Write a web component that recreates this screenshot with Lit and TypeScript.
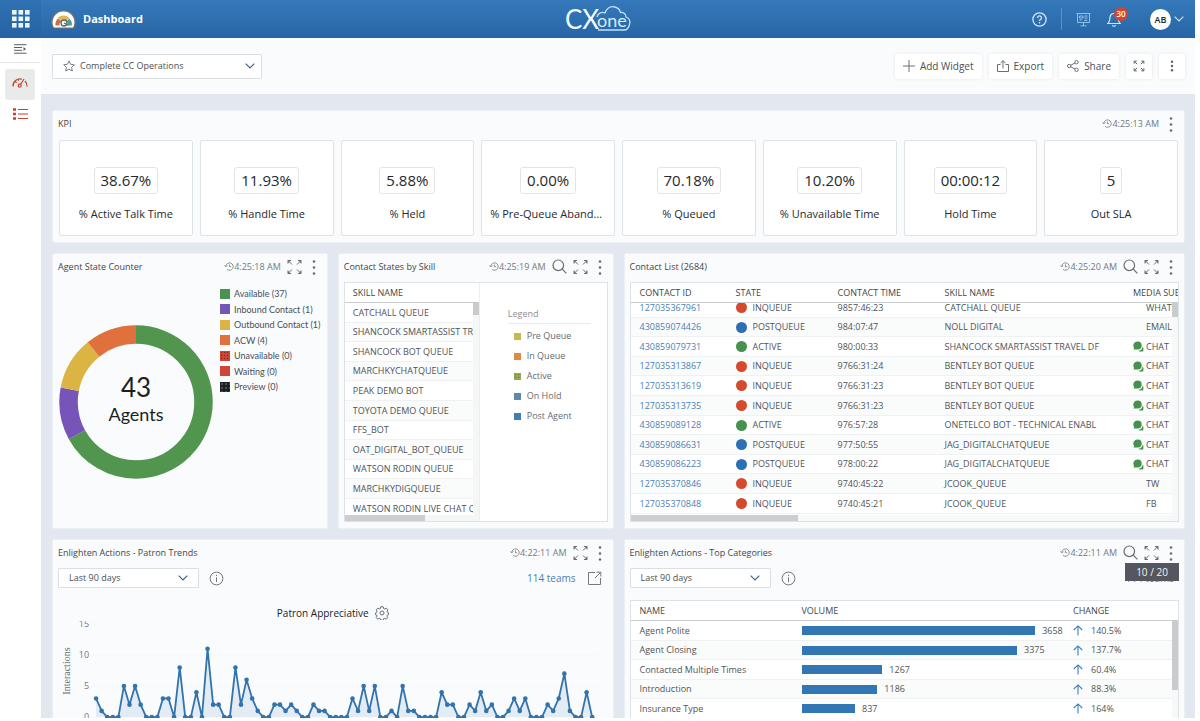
import { LitElement, html, svg, css, nothing } from "lit";
import { customElement, property } from "lit/decorators.js";
import { classMap } from "lit/directives/class-map.js";

/* ---------- icons ---------- */

const expandIcon = html`<svg class="ico" width="15" height="16" viewBox="0 0 15 16" fill="none" stroke="currentColor" aria-hidden="true">
  <path d="M1 4.500V1.500H4M1 1.500l4 4M11 1.500h3V4.500M14 1.500l-4 4M1 11.500v3H4M1 14.500l4-4M14 11.500v3H11M14 14.500l-4-4" />
  <path d="M1 1.500h2.500L1 4zM14 1.500v2.500L11.500 1.500zM1 14.500V12l2.500 2.500zM14 14.500h-2.500L14 12z" fill="currentColor" stroke="none" />
</svg>`;

const kebabIcon = html`<svg class="ico" width="4" height="16" viewBox="0 0 4 16" fill="currentColor" aria-hidden="true">
  <circle cx="2" cy="2.500" r="1.300" /><circle cx="2" cy="8.500" r="1.300" /><circle cx="2" cy="14.500" r="1.300" />
</svg>`;

const searchIcon = html`<svg class="ico" width="15" height="15" viewBox="0 0 15 15" fill="none" stroke="currentColor" stroke-width="1.200" aria-hidden="true">
  <circle cx="6.300" cy="6.300" r="5.300" /><path d="M10.200 10.200l4.200 4.200" />
</svg>`;

const historyIcon = html`<svg class="ico" width="10" height="9" viewBox="0 0 10 9" fill="none" stroke="currentColor" stroke-width=".8" aria-hidden="true">
  <path d="M1.800 4.500a3.700 3.700 0 1 1 1.200 2.800M.3 3.400l1.500 1.500 1.400-1.500M5.400 2.400v2.300h1.800" />
</svg>`;

const chevronIcon = html`<svg class="chev" width="10" height="6" viewBox="0 0 10 6" fill="none" stroke="currentColor" stroke-width="1.100" aria-hidden="true">
  <path d="M.7.7L5 5 9.300.7" />
</svg>`;

const infoIcon = html`<svg width="15" height="15" viewBox="0 0 15 15" fill="none" stroke="#75797d" aria-hidden="true">
  <circle cx="7.500" cy="7.500" r="6.400" /><path d="M7.500 6.300v4.800M7.500 3.800v1.300" />
</svg>`;

const chatIcon = html`<svg width="11" height="11" viewBox="0 0 11 11" aria-hidden="true">
  <path d="M4.700.6a4 4 0 0 1 0 8H.5l.6-1.700A4 4 0 0 1 4.700.6z" fill="#45914d" />
  <path d="M9.700 5.200l.8 2-.3 3.200H6.300l-.9-.7c2.400 0 4.200-1.800 4.300-4.500z" fill="#45914d" />
</svg>`;

const arrowUpIcon = html`<svg width="10" height="11" viewBox="0 0 10 11" fill="none" stroke="#3d7fbb" stroke-width="1.100" aria-hidden="true">
  <path d="M5 10.500V1M.8 5L5 .9 9.200 5" />
</svg>`;

/* ---------- shared styles ---------- */

const base = css`
  :host { display: block; min-width: 0; }
  * { box-sizing: border-box; }
  svg { display: block; flex: none; }
  button {
    font: inherit; color: inherit; background: none; border: 0; padding: 0;
    display: flex; align-items: center; cursor: pointer;
  }
  a { text-decoration: none; color: #4a7fb5; }
  .select { display: inline-grid; grid-template-columns: 1fr auto; align-items: center; color: #4b4f54; }
  .select select {
    grid-area: 1 / 1 / 2 / 3; appearance: none; width: 100%; font: inherit; color: inherit;
    background: #fff; border: 1px solid #dcdfe2; border-radius: 1px; margin: 0;
  }
  .select .chev { grid-area: 1 / 2; margin-right: 11px; pointer-events: none; color: #3c5f86; }
  table { border-collapse: separate; border-spacing: 0; table-layout: fixed; width: 100%; }
  th, td { padding: 0 0 0 9px; text-align: left; white-space: nowrap; overflow: hidden; line-height: 18px; }
  th {
    position: sticky; top: 0; z-index: 1; height: 20px; background: #fff;
    border-bottom: 1px solid #c9ccce; font-weight: 400; color: #43474b;
  }
  td { height: 20px; border-bottom: 1px solid #f0f1f2; color: #505459; }
  tbody tr:nth-child(5n + 2) td, tbody tr:nth-child(5n + 4) td { height: 19px; }
  tbody tr:nth-child(even) { background: #fafbfb; }
  .box { background: #fff; border: 1px solid #dfe2e4; }
  .toolline { display: flex; align-items: center; }
  .toolline .select { width: 141px; }
  .toolline select { height: 20px; padding-left: 10px; }
  .info { margin-left: 10px; }
`;

/* ---------- widget frame ---------- */

@customElement("dash-widget")
class DashWidget extends LitElement {
  @property() heading = "";
  @property() time = "";
  @property({ type: Boolean }) searchable = false;
  @property({ type: Boolean }) expandable = false;

  static styles = [base, css`
    :host { display: flex; flex-direction: column; background: #f9fbfd; padding: 0 5px 6px; box-shadow: 0 0 2px #fff; }
    header { display: flex; align-items: center; height: 25px; margin-bottom: 3px; gap: 6px; padding-right: 6px; color: #6a6f73; }
    h2 { flex: 1; margin: 0; font-size: 9px; line-height: 14px; font-weight: 500; color: #43474b; white-space: nowrap; }
    .time { display: flex; align-items: center; font-size: 9px; line-height: 14px; color: #74797e; white-space: nowrap; }
    .more { margin-left: 4px; }
    .body { flex: 1; min-height: 0; display: flex; flex-direction: column; }
  `];

  render() {
    return html`
      <header>
        <h2>${this.heading}</h2>
        <span class="time">${historyIcon}${this.time}</span>
        ${this.searchable ? html`<button aria-label="Search">${searchIcon}</button>` : nothing}
        ${this.expandable ? html`<button aria-label="Expand">${expandIcon}</button>` : nothing}
        <button class="more" aria-label="More options">${kebabIcon}</button>
      </header>
      <div class="body"><slot></slot></div>
    `;
  }
}

/* ---------- KPI row ---------- */

const kpis: [string, string][] = [
  ["38.67%", "% Active Talk Time"],
  ["11.93%", "% Handle Time"],
  ["5.88%", "% Held"],
  ["0.00%", "% Pre-Queue Abandoned"],
  ["70.18%", "% Queued"],
  ["10.20%", "% Unavailable Time"],
  ["00:00:12", "Hold Time"],
  ["5", "Out SLA"],
];

@customElement("kpi-cards")
class KpiCards extends LitElement {
  static styles = [base, css`
    .cards { display: grid; grid-template-columns: repeat(8, minmax(0, 1fr)); gap: 7px; padding: 1px 1px 0; }
    .card {
      display: flex; flex-direction: column; align-items: center; gap: 12px; height: 96px;
      padding: 26px 8px 0; background: #fff; border: 1px solid #dfe3e5; border-radius: 2px; color: #26292c;
    }
    .value { font-size: 15px; line-height: 25px; padding: 0 6px; border: 1px solid #e2e4e6; border-radius: 3px; }
    .label { font-size: 11px; line-height: 16px; max-width: 100%; overflow: hidden; text-overflow: ellipsis; white-space: nowrap; }
  `];

  render() {
    return html`<div class="cards">
      ${kpis.map(([value, label]) => html`<div class="card"><div class="value">${value}</div><div class="label">${label}</div></div>`)}
    </div>`;
  }
}

/* ---------- agent state donut ---------- */

const slices = [
  { color: "#52954f", from: 0, to: 241 },
  { color: "#7654b8", from: 241, to: 281 },
  { color: "#dcb443", from: 281, to: 321 },
  { color: "#e0703c", from: 321, to: 360 },
];

const agentLegend: [string, string][] = [
  ["Available (37)", "green"],
  ["Inbound Contact (1)", "purple"],
  ["Outbound Contact (1)", "yellow"],
  ["ACW (4)", "orange"],
  ["Unavailable (0)", "red dotted"],
  ["Waiting (0)", "red"],
  ["Preview (0)", "black dotted"],
];

@customElement("agent-states")
class AgentStates extends LitElement {
  static styles = [base, css`
    :host { font-family: Lato, sans-serif; }
    .wrap { display: flex; align-items: flex-start; gap: 7px; padding: 4px 0 0 1px; }
    .donut { margin-top: 39px; flex: none; }
    .count { font-size: 26px; fill: #1c1f22; text-anchor: middle; }
    .unit { font-size: 18px; fill: #1c1f22; text-anchor: middle; }
    ul { list-style: none; margin: 0; padding: 0; display: grid; font-size: 9px; line-height: 13px; color: #4b4f54; }
    li { display: flex; align-items: center; gap: 4px; white-space: nowrap; height: 15px; }
    li:nth-child(even) { height: 16px; }
    .sw { width: 10px; height: 10px; }
    .green { background: #4b9150; }
    .purple { background: #7257b4; }
    .yellow { background: #dcb443; }
    .orange { background: #e0703c; }
    .red { background: #cf4436; }
    .black { background: #1d2023; }
    .red.dotted { background-image: radial-gradient(#6b2a20 1px, transparent 1px); background-size: 3px 3px; }
    .black.dotted { background-image: radial-gradient(#4a4f53 1px, transparent 1px); background-size: 4px 4px; }
  `];

  render() {
    return html`<div class="wrap">
      <svg class="donut" width="154" height="154" viewBox="0 0 154 154" role="img" aria-label="43 agents by state">
        ${slices.map((s) => svg`<circle cx="77" cy="77" r="67.500" fill="none" stroke=${s.color} stroke-width="18.500"
          pathLength="360" stroke-dasharray="${s.to - s.from} 360" stroke-dashoffset=${-s.from} transform="rotate(-90 77 77)" />`)}
        <text class="count" x="77" y="72">43</text>
        <text class="unit" x="77" y="96">Agents</text>
      </svg>
      <ul>${agentLegend.map(([label, cls]) => html`<li><span class="sw ${cls}"></span>${label}</li>`)}</ul>
    </div>`;
  }
}

/* ---------- contact states by skill ---------- */

const skills = [
  "CATCHALL QUEUE", "SHANCOCK SMARTASSIST TRAVEL", "SHANCOCK BOT QUEUE", "MARCHKYCHATQUEUE",
  "PEAK DEMO BOT", "TOYOTA DEMO QUEUE", "FFS_BOT", "OAT_DIGITAL_BOT_QUEUE", "WATSON RODIN QUEUE",
  "MARCHKYDIGQUEUE", "WATSON RODIN LIVE CHAT QUEUE",
];

const skillLegend: [string, string][] = [
  ["Pre Queue", "pre"], ["In Queue", "inq"], ["Active", "act"], ["On Hold", "hold"], ["Post Agent", "post"],
];

@customElement("skill-states")
class SkillStates extends LitElement {
  static styles = [base, css`
    :host { flex: 1; min-height: 0; display: grid; }
    .box { display: grid; grid-template-columns: 135px 1fr; height: 240px; overflow: hidden; }
    .list { display: grid; grid-template: minmax(0, 1fr) 6px / minmax(0, 1fr) 6px; height: 238px; border-right: 1px solid #eceeef; }
    .rows { grid-column: 1 / 3; grid-row: 1; overflow: hidden; }
    th, td { padding-left: 8px; }
    td { padding-right: 6px; }
    td div { overflow: hidden; }
    .vbar { grid-area: 1 / 2; z-index: 2; background: #f5f6f6; margin-top: 20px; }
    .vbar i { display: block; height: 12px; background: #c9cbcc; }
    .hbar { grid-area: 2 / 1 / 3 / 3; background: #f5f6f6; }
    .hbar i { display: block; width: 80px; height: 6px; background: #cccecf; }
    .legend { padding: 24px 16px 0 28px; color: #666b70; }
    h3 { margin: 0 0 5px; font-size: 9px; line-height: 14px; padding-bottom: 2px; font-weight: 400; color: #8a8f93; border-bottom: 1px solid #e8eaeb; }
    ul { list-style: none; margin: 0; padding: 0 0 0 6px; display: grid; gap: 6px; line-height: 14px; }
    li { display: flex; align-items: center; gap: 6px; white-space: nowrap; }
    .sw { width: 7px; height: 7px; }
    .pre { background: #c9b84b; }
    .inq { background: #de8a42; }
    .act { background: #93a94c; background-image: radial-gradient(#5f7d35 1px, transparent 1px); background-size: 3px 3px; }
    .hold { background: #5e88ab; }
    .post { background: #417cb5; }
  `];

  render() {
    return html`<div class="box">
      <div class="list">
        <div class="rows">
          <table>
            <thead><tr><th>SKILL NAME</th></tr></thead>
            <tbody>${skills.map((s) => html`<tr><td><div>${s}</div></td></tr>`)}</tbody>
          </table>
        </div>
        <div class="vbar"><i></i></div>
        <div class="hbar"><i></i></div>
      </div>
      <div class="legend">
        <h3>Legend</h3>
        <ul>${skillLegend.map(([label, cls]) => html`<li><span class="sw ${cls}"></span>${label}</li>`)}</ul>
      </div>
    </div>`;
  }
}

/* ---------- contact list ---------- */

const contacts: [string, string, string, string, string][] = [
  ["127035367961", "INQUEUE", "9857:46:23", "CATCHALL QUEUE", "WHATSAPP"],
  ["430859074426", "POSTQUEUE", "984:07:47", "NOLL DIGITAL", "EMAIL"],
  ["430859079731", "ACTIVE", "980:00:33", "SHANCOCK SMARTASSIST TRAVEL DF", "CHAT"],
  ["127035313867", "INQUEUE", "9766:31:24", "BENTLEY BOT QUEUE", "CHAT"],
  ["127035313619", "INQUEUE", "9766:31:23", "BENTLEY BOT QUEUE", "CHAT"],
  ["127035313735", "INQUEUE", "9766:31:23", "BENTLEY BOT QUEUE", "CHAT"],
  ["430859089128", "ACTIVE", "976:57:28", "ONETELCO BOT - TECHNICAL ENABL", "CHAT"],
  ["430859086631", "POSTQUEUE", "977:50:55", "JAG_DIGITALCHATQUEUE", "CHAT"],
  ["430859086223", "POSTQUEUE", "978:00:22", "JAG_DIGITALCHATQUEUE", "CHAT"],
  ["127035370846", "INQUEUE", "9740:45:22", "JCOOK_QUEUE", "TW"],
  ["127035370848", "INQUEUE", "9740:45:21", "JCOOK_QUEUE", "FB"],
];

@customElement("contact-list")
class ContactList extends LitElement {
  static styles = [base, css`
    .box { display: grid; grid-template: minmax(0, 1fr) 6px / minmax(0, 1fr) 6px; height: 240px; }
    .rows { grid-area: 1 / 1 / 2 / 3; overflow: hidden; }
    table { margin-bottom: 12px; }
    .id { width: 96px; }
    .state { width: 102px; }
    .time { width: 107px; }
    .media { width: 54px; }
    .flag { display: flex; align-items: center; gap: 6px; }
    .dot { width: 11px; height: 11px; border-radius: 50%; background: #2c6fb5; }
    .dot.inqueue { background: #d54a2d; }
    .dot.active { background: #45914d; }
    .channel { display: grid; grid-template-columns: 11px 1fr; gap: 2px; align-items: center; height: 18px; }
    .channel span { grid-column: 2; }
    .channel svg { grid-row: 1; }
    .vbar { grid-area: 1 / 2; z-index: 2; margin-top: 20px; background: #f7f8f8; }
    .vbar i { display: block; height: 14px; background: #c9cbcc; }
    .hbar { grid-area: 2 / 1 / 3 / 3; background: #f7f8f8; }
    .hbar i { display: block; width: 167px; height: 6px; background: #cccecf; }
  `];

  firstUpdated() {
    this.renderRoot.querySelector(".rows")!.scrollTop = 5;
  }

  render() {
    return html`<div class="box">
      <div class="rows">
        <table>
          <colgroup><col class="id" /><col class="state" /><col class="time" /><col /><col class="media" /></colgroup>
          <thead><tr><th>CONTACT ID</th><th>STATE</th><th>CONTACT TIME</th><th>SKILL NAME</th><th>MEDIA SUBTYPE</th></tr></thead>
          <tbody>
            ${contacts.map(([id, state, time, skill, media]) => html`<tr>
              <td><a href="#${id}">${id}</a></td>
              <td><div class="flag"><span class=${classMap({ dot: true, [state.toLowerCase()]: true })}></span>${state}</div></td>
              <td>${time}</td>
              <td>${skill}</td>
              <td><div class="channel">${media === "CHAT" ? chatIcon : nothing}<span>${media}</span></div></td>
            </tr>`)}
          </tbody>
        </table>
      </div>
      <div class="vbar"><i></i></div>
      <div class="hbar"><i></i></div>
    </div>`;
  }
}

/* ---------- patron trends ---------- */

const interactions = [
  3, 1, 0, 0, 0, 5, 2, 5, 2, 0, 0, 0, 3, 3, 0, 8, 0, 0, 4, 0, 11, 2, 2, 0, 0, 8, 2, 6, 3, 1, 0, 0, 2, 2, 1, 2, 1, 0, 0, 2, 1, 1, 0, 0, 0, 0,
  3, 1, 5, 1, 5, 0, 0, 1, 0, 5, 1, 1, 0, 0, 0, 0, 4, 2, 2, 0, 0, 2, 1, 4, 1, 2, 0, 0, 1, 3, 1, 3, 0, 0, 0, 2, 1, 3, 7, 1, 0, 0, 4, 0,
];

const rangeSelect = html`<label class="select">
  <select aria-label="Date range"><option>Last 90 days</option><option>Last 30 days</option></select>${chevronIcon}
</label>
<button class="info" aria-label="Information">${infoIcon}</button>`;

@customElement("patron-trends")
class PatronTrends extends LitElement {
  static styles = [base, css`
    .toolline { padding-right: 6px; }
    .teams { margin-left: auto; margin-right: 11px; font-size: 10px; line-height: 14px; }
    .title { display: flex; justify-content: center; align-items: center; gap: 6px; margin-top: 17px; font-size: 10px; line-height: 16px; color: #1e2225; }
    .plot { width: 100%; height: auto; }
    .tick { font-size: 9px; fill: #74797e; text-anchor: end; }
    .axis { font-family: "Liberation Serif", serif; font-size: 10px; fill: #6a6f74; text-anchor: middle; }
    .line { fill: none; stroke: #3273ab; stroke-width: 1.8; stroke-linejoin: round; }
    .area { fill: #e3ebf4; }
    .point { fill: #3273ab; }
    .grid { stroke: #f5f7f9; }
  `];

  render() {
    const x = (i: number) => 38 + i * 5.57;
    const y = (v: number) => 96 - v * 6.2;
    const pts = interactions.map((v, i) => `${x(i).toFixed(1)},${y(v).toFixed(1)}`).join(" ");
    return html`
      <div class="toolline">
        ${rangeSelect}
        <a class="teams" href="#teams">114 teams</a>
        <button aria-label="Open in new window">
          <svg width="15" height="15" viewBox="0 0 15 15" fill="none" stroke="#75797d">
            <path d="M8 1.500H1.500v12h12V7M9.500 1.200h4.300v4.300M13.600 1.400L8 7" />
          </svg>
        </button>
      </div>
      <div class="title">Patron Appreciative
        <svg width="14" height="14" viewBox="0 0 14 14" fill="none" stroke="#6a6f74">
          <path d="M5.800.8h2.400l.4 1.700 1.200.5 1.500-.9 1.600 1.700-.8 1.400.4 1.200 1 .3v2l-1.200.4-.4 1 .8 1.500-1.500 1.600-1.500-.9-1.100.5-.4 1.400H5.800l-.4-1.400-1.200-.5-1.500.8-1.500-1.500.8-1.500-.4-1-1-.3v-2l1-.4.4-1.200-.8-1.400 1.600-1.700 1.500.9 1.100-.5z" />
          <circle cx="7" cy="7" r="2" />
        </svg>
      </div>
      <svg class="plot" viewBox="0 0 549 112" role="img" aria-label="Interactions over the last 90 days">
        ${[0, 5, 10, 15].map((v) => svg`<line class="grid" x1="34" x2="540" y1=${y(v)} y2=${y(v)} /><text class="tick" x="31" y=${y(v) + 3}>${v}</text>`)}
        <text class="axis" transform="translate(12 50) rotate(-90)">Interactions</text>
        <polygon class="area" points="${x(0)},96 ${pts} ${x(89)},96" />
        <polyline class="line" points=${pts} />
        ${interactions.map((v, i) => svg`<circle class="point" cx=${x(i)} cy=${y(v)} r="2.300" />`)}
      </svg>
    `;
  }
}

/* ---------- top categories ---------- */

const categories: [string, number, string][] = [
  ["Agent Polite", 3658, "140.5%"],
  ["Agent Closing", 3375, "137.7%"],
  ["Contacted Multiple Times", 1267, "60.4%"],
  ["Introduction", 1186, "88.3%"],
  ["Insurance Type", 837, "164%"],
];

@customElement("top-categories")
class TopCategories extends LitElement {
  static styles = [base, css`
    .toolline { padding-right: 5px; position: relative; }
    .teams { margin-left: auto; font-size: 10px; line-height: 14px; }
    .pager {
      position: absolute; right: 0; top: -5px; width: 54px; background: #54575f; color: #f4f5f6;
      font-size: 10px; line-height: 18px; text-align: center;
    }
    .box { margin-top: 12px; display: grid; grid-template-columns: minmax(0, 1fr) 6px; height: 132px; }
    .rows { grid-area: 1 / 1 / 2 / 3; }
    .vbar { grid-area: 1 / 2; z-index: 2; margin-top: 20px; background: #f7f8f8; }
    .vbar i { display: block; height: 69px; background: #c9cbcc; }
    .name { width: 162px; }
    .change { width: 114px; }
    .volume { display: flex; align-items: center; gap: 7px; }
    .bar { height: 9px; background: #3276b4; }
    .delta { display: flex; align-items: center; gap: 8px; }
  `];

  render() {
    return html`
      <div class="toolline">
        ${rangeSelect}
        <a class="teams" href="#teams">114 teams</a>
        <div class="pager">10 / 20</div>
      </div>
      <div class="box">
        <div class="rows">
          <table>
            <colgroup><col class="name" /><col /><col class="change" /></colgroup>
            <thead><tr><th>NAME</th><th>VOLUME</th><th>CHANGE</th></tr></thead>
            <tbody>
              ${categories.map(([name, volume, change]) => html`<tr>
                <td>${name}</td>
                <td><div class="volume"><div class="bar" style="width: ${((volume / 3658) * 89).toFixed(1)}%"></div>${volume}</div></td>
                <td><div class="delta">${arrowUpIcon}${change}</div></td>
              </tr>`)}
            </tbody>
          </table>
        </div>
        <div class="vbar"><i></i></div>
      </div>
    `;
  }
}

/* ---------- page ---------- */

@customElement("app-root")
class AppRoot extends LitElement {
  static styles = [base, css`
    :host {
      display: flex; flex-direction: column; box-sizing: border-box; height: 100vh; overflow: hidden; padding: 0 5px 3px 0;
      background: #fff; color: #4b4f54; font: 9px/14px "Open Sans", sans-serif;
    }
    .top {
      flex: none; height: 38px; display: grid; grid-template-columns: 1fr auto 1fr; align-items: center;
      background: linear-gradient(#3579ba, #2765a5); color: #fff;
    }
    .brand { display: flex; align-items: center; align-self: stretch; }
    .apps { width: 41px; align-self: stretch; justify-content: center; background: #1f5c9a40; }
    h1 { margin: 0 0 0 7px; font-size: 11px; line-height: 16px; font-weight: 700; }
    .gauge { margin-left: 10px; }
    .logo { overflow: visible; }
    .cx { font-family: Lato, sans-serif; font-weight: 400; font-size: 26px; fill: #f2faff; }
    .one { font-family: Lato, sans-serif; font-weight: 400; font-size: 18px; fill: #d3ecff; }
    .account { display: flex; align-items: center; justify-content: flex-end; padding-right: 11px; color: #cfe7fb; }
    .rule { width: 1px; height: 22px; background: #5b93c8; margin: 0 14px; }
    .bell { position: relative; margin-left: 16px; }
    .badge {
      position: absolute; left: 7px; top: -5px; width: 14px; height: 14px; border-radius: 50%;
      background: #d2452e; color: #fff; font-size: 8px; line-height: 14px; font-weight: 600; text-align: center;
    }
    .avatar { width: 21px; height: 21px; border-radius: 50%; background: #fff; color: #23272b; font-size: 9px; line-height: 21px; font-weight: 600; text-align: center; }
    .user { margin-left: 29px; gap: 3px; }
    .page { flex: 1; min-height: 0; display: grid; grid-template-columns: 41px minmax(0, 1fr); }
    nav { display: flex; flex-direction: column; align-items: center; padding-right: 1px; }
    .collapse { width: 100%; height: 25px; justify-content: center; padding-bottom: 3px; border-bottom: 1px solid #e6e8ea; color: #5a5e62; }
    .nav { width: 30px; height: 28px; display: grid; place-items: center; border-radius: 3px; color: #c0452f; }
    .nav.current { height: 31px; padding-bottom: 4px; background: #e9eaea; margin-top: 6px; }
    main { display: flex; flex-direction: column; min-height: 0; overflow: hidden; background: #e3e7ef; }
    .toolbar { flex: none; display: flex; align-items: center; gap: 7px; height: 56px; padding: 0 10px 0 11px; background: #f9fbfc; }
    .toolbar .select { width: 210px; margin-right: auto; grid-template-columns: auto 1fr auto; }
    .toolbar .select select { grid-column: 1 / 4; height: 25px; padding-left: 27px; }
    .toolbar .select .chev { grid-area: 1 / 3; margin-right: 7px; }
    .star { grid-area: 1 / 1; margin-left: 11px; z-index: 1; }
    .toolbar button { height: 25px; padding: 0 8px; gap: 5px; font-size: 10px; background: #fff; border-radius: 2px; box-shadow: 0 0 3px #e3e6e9; }
    .toolbar button.sq { width: 26px; padding: 0; justify-content: center; }
    .board { display: grid; grid-template-columns: repeat(4, minmax(0, 1fr)); grid-template-rows: 131px 274px auto; gap: 12px; padding: 17px 11px 0 12px; }
    .full { grid-column: 1 / -1; }
    .half { grid-column: span 2; }
  `];

  render() {
    return html`
      <header class="top">
        <div class="brand">
          <button class="apps" aria-label="Applications">
            <svg width="18" height="18" viewBox="0 0 18 18" fill="#e6f5ff">
              ${[0, 6.5, 13].map((y) => [0, 6.5, 13].map((x) => svg`<rect x=${x} y=${y} width="4.600" height="4.600" />`))}
            </svg>
          </button>
          <svg class="gauge" width="25" height="20" viewBox="0 0 25 20" aria-hidden="true">
            <path d="M2.500 19A11.500 11.500 0 1 1 22.500 19z" fill="#fff" stroke="#7b736f" stroke-width="1.200" />
            <path d="M4.500 16.500a8 8 0 0 1 2.500-7l3 3a4 4 0 0 0-1.500 4z" fill="#cf6a4d" />
            <path d="M6.500 9a8.500 8.500 0 0 1 12 0l-3.500 3.500a4 4 0 0 0-5 0z" fill="#dcb95c" />
            <path d="M18.500 9.500a9 9 0 0 1 2.500 7h-4a4 4 0 0 0-1.500-4z" fill="#4f9d9c" />
            <circle cx="13" cy="14" r="3" fill="#fff" stroke="#5d666c" stroke-width="1.300" />
            <path d="M13 14l4.500 2.500" stroke="#5d666c" stroke-width="1.300" />
          </svg>
          <h1>Dashboard</h1>
        </div>
        <svg class="logo" width="66" height="28" viewBox="0 0 66 28" role="img" aria-label="CXone">
          <text class="cx" x="0" y="24">CX</text>
          <text class="one" x="32" y="22">one</text>
          <path d="M32 12c1-4 5-5.500 8-4C42 3 46 1 50 2c3 .8 5 3 5.500 5.500 3-.5 5.500 1.500 5.500 4.500 3 1 4.500 4 3.500 7.500C63.600 23.500 61.500 25 59 25H33" fill="none" stroke="#bfe2fb" stroke-width="1.300" />
        </svg>
        <div class="account">
          <button aria-label="Help">
            <svg width="15" height="15" viewBox="0 0 15 15" fill="none" stroke="currentColor" stroke-width="1.300">
              <circle cx="7.500" cy="7.500" r="6.600" />
              <path d="M5.500 6a2 2 0 1 1 2.900 1.700c-.6.300-.9.600-.9 1.300M7.500 10v1.400" />
            </svg>
          </button>
          <span class="rule"></span>
          <button aria-label="Presentation">
            <svg width="15" height="15" viewBox="0 0 15 15" fill="none" stroke="#8fc0ea">
              <path d="M.5 1.500h14M1.500 1.500v9h12v-9M7.500 10.500v3.500M4.500 13.800h6" />
              <path d="M3.500 4h3.500v2H3.500zM8.500 4h3M8.500 6h3M3.500 8h2.500M8 8.300h3.500" />
            </svg>
          </button>
          <button class="bell" aria-label="Notifications, 30 new">
            <svg width="14" height="15" viewBox="0 0 14 15" fill="none" stroke="currentColor" stroke-width="1.200">
              <path d="M7 1.500c-2.600 0-4 2-4 4.300C3 9 2 10.300.9 11.500h12.200C12 10.300 11 9 11 5.800 11 3.500 9.600 1.500 7 1.500zM5.200 13.300c.8 1 2.800 1 3.600 0" />
            </svg>
            <span class="badge">30</span>
          </button>
          <button class="user" aria-label="Account">
            <span class="avatar">AB</span>${chevronIcon}
          </button>
        </div>
      </header>

      <div class="page">
        <nav>
          <button class="collapse" aria-label="Expand menu">
            <svg width="13" height="10" viewBox="0 0 13 10" fill="none" stroke="currentColor">
              <path d="M0 .7h12.500M0 3.500h8M0 6.300h8M0 9.200h12.500" /><path d="M9.500 3l2.500 2-2.500 2z" fill="currentColor" stroke="none" />
            </svg>
          </button>
          <a class="nav current" href="#dashboard" aria-label="Dashboard">
            <svg width="16" height="12" viewBox="0 0 16 12" fill="none" stroke="currentColor" stroke-width="1.200">
              <path d="M1 9.500a7 7 0 0 1 9-7.200M13 4a7 7 0 0 1 2 5.500M12 2L8.500 7.500M3.300 4.600l1.300 1.200M6.500 2v1.700" /><circle cx="7.700" cy="8.700" r="1.500" />
            </svg>
          </a>
          <a class="nav" href="#lists" aria-label="Lists">
            <svg width="15" height="12" viewBox="0 0 15 12" fill="none" stroke="currentColor" stroke-width="1.200">
              <path d="M5 1.500h10M5 6h10M5 10.500h10" /><path d="M0 1.500h3M0 6h3M0 10.500h3" stroke-width="2.600" />
            </svg>
          </a>
        </nav>

        <main>
          <div class="toolbar">
            <label class="select">
              <select aria-label="Dashboard"><option>Complete CC Operations</option></select>
              <svg class="star" width="12" height="12" viewBox="0 0 12 12" fill="none" stroke="#6a6f74" stroke-width=".9">
                <path d="M6 .9l1.600 3.400 3.700.5-2.700 2.500.7 3.700L6 9.200 2.700 11l.7-3.700L.7 4.800l3.700-.5z" />
              </svg>
              ${chevronIcon}
            </label>
            <button>
              <svg width="12" height="12" viewBox="0 0 12 12" stroke="#6a6f74"><path d="M6 0v12M0 6h12" /></svg>Add Widget
            </button>
            <button>
              <svg width="12" height="12" viewBox="0 0 12 12" fill="none" stroke="#6a6f74"><path d="M3.500 4.500h-3v7h11v-7h-3M6 8.500V.8M3.500 3L6 .7 8.500 3" /></svg>Export
            </button>
            <button>
              <svg width="12" height="12" viewBox="0 0 12 12" fill="none" stroke="#6a6f74"><circle cx="2.200" cy="6" r="1.700" /><circle cx="9.500" cy="2.200" r="1.700" /><circle cx="9.500" cy="9.800" r="1.700" /><path d="M3.800 5.200L8 3M3.800 6.800L8 9" /></svg>Share
            </button>
            <button class="sq" aria-label="Full screen">
              <svg width="12" height="12" viewBox="0 0 16 16" fill="none" stroke="#5c6166" stroke-width="1.300"><path d="M1.500 5V1.500H5M1.500 1.500l4 4M11 1.500h3.500V5M14.500 1.500l-4 4M1.500 11v3.500H5M1.500 14.500l4-4M14.500 11v3.500H11M14.500 14.500l-4-4" /></svg>
            </button>
            <button class="sq" aria-label="More">
              <svg width="4" height="12" viewBox="0 0 4 12" fill="#5c6166"><circle cx="2" cy="1.800" r="1.200" /><circle cx="2" cy="6" r="1.200" /><circle cx="2" cy="10.200" r="1.200" /></svg>
            </button>
          </div>

          <div class="board">
            <dash-widget class="full" heading="KPI" time="4:25:13 AM"><kpi-cards></kpi-cards></dash-widget>
            <dash-widget heading="Agent State Counter" time="4:25:18 AM" expandable><agent-states></agent-states></dash-widget>
            <dash-widget heading="Contact States by Skill" time="4:25:19 AM" searchable expandable><skill-states></skill-states></dash-widget>
            <dash-widget class="half" heading="Contact List (2684)" time="4:25:20 AM" searchable expandable><contact-list></contact-list></dash-widget>
            <dash-widget class="half" heading="Enlighten Actions - Patron Trends" time="4:22:11 AM" expandable><patron-trends></patron-trends></dash-widget>
            <dash-widget class="half" heading="Enlighten Actions - Top Categories" time="4:22:11 AM" searchable expandable><top-categories></top-categories></dash-widget>
          </div>
        </main>
      </div>
    `;
  }
}
